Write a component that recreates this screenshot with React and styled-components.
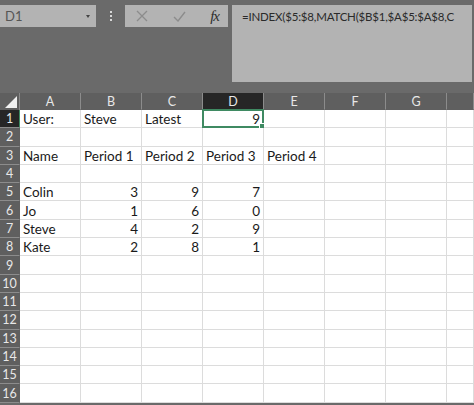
import React from 'react';
import styled, { createGlobalStyle } from 'styled-components';

const GlobalStyle = createGlobalStyle`
  html, body {
    margin: 0;
    padding: 0;
    background: #6a6a6a;
  }
`;

const Page = styled.div`
  width: 474px;
  height: 405px;
  overflow: hidden;
  background: #6a6a6a;
  font-family: Lato, "Open Sans", "Liberation Sans", sans-serif;
`;

const TopBar = styled.div`
  display: flex;
  align-items: flex-start;
  height: 93px;
  padding-top: 5px;
  box-sizing: border-box;
`;

const NameBox = styled.div`
  width: 96px;
  height: 22px;
  background: #b3b3b3;
  display: flex;
  align-items: center;
  justify-content: space-between;
  padding: 0 6px 0 5px;
  box-sizing: border-box;
  color: #555;
  font-size: 13px;
`;

const Caret = styled.span`
  width: 0;
  height: 0;
  border-left: 2.5px solid transparent;
  border-right: 2.5px solid transparent;
  border-top: 3px solid #444;
`;

const Grip = styled.div`
  width: 29px;
  height: 22px;
  display: flex;
  flex-direction: column;
  align-items: center;
  justify-content: center;
  gap: 2px;
`;

const Dot = styled.span`
  width: 2px;
  height: 2px;
  background: #d8d8d8;
`;

const ButtonsBox = styled.div`
  width: 103px;
  height: 22px;
  background: #b3b3b3;
  display: flex;
  align-items: center;
  justify-content: space-between;
  padding: 0 9px 0 11px;
  box-sizing: border-box;
`;

const Fx = styled.span`
  font-family: "Liberation Serif", serif;
  font-style: italic;
  font-size: 15px;
  color: #2e2e2e;
  letter-spacing: -1px;
`;

const FormulaBar = styled.div`
  flex: 1;
  height: 77px;
  margin: 0 2px 0 4px;
  background: #b3b3b3;
  padding: 5px 0 0 10px;
  box-sizing: border-box;
  font-size: 11.5px;
  letter-spacing: -0.2px;
  color: #2a2a2a;
  white-space: nowrap;
  overflow: hidden;
`;

const Sheet = styled.div`
  display: grid;
  grid-template-columns: 20px repeat(7, 61px) 1fr;
  grid-template-rows: 17px;
  grid-auto-rows: 18.3px;
`;

const Corner = styled.div`
  background: #5f5f5f;
  position: relative;
  border-right: 1px solid #8a8a8a;
  box-sizing: border-box;
  &::after {
    content: '';
    position: absolute;
    right: 2px;
    bottom: 2px;
    border-left: 12px solid transparent;
    border-bottom: 12px solid #f2f2f2;
  }
`;

const ColHead = styled.div`
  background: ${({ $active }) => ($active ? '#262626' : '#5f5f5f')};
  color: #e8e8e8;
  font-size: 12.5px;
  display: flex;
  align-items: center;
  justify-content: center;
  border-right: 1px solid #8c8c8c;
  border-bottom: 1px solid ${({ $active }) => ($active ? '#3f8a62' : '#5f5f5f')};
  box-sizing: border-box;
`;

const RowHead = styled.div`
  background: ${({ $active }) => ($active ? '#262626' : '#5f5f5f')};
  color: #e8e8e8;
  font-size: 12.5px;
  display: flex;
  align-items: center;
  justify-content: center;
  border-bottom: 1px solid #8c8c8c;
  border-right: 1px solid ${({ $active }) => ($active ? '#3f8a62' : '#5f5f5f')};
  box-sizing: border-box;
`;

const Cell = styled.div`
  background: #fff;
  border-right: 1px solid #dcdcdc;
  border-bottom: 1px solid #dcdcdc;
  box-sizing: border-box;
  font-size: 13.5px;
  color: #1a1a1a;
  display: flex;
  align-items: center;
  justify-content: ${({ $num }) => ($num ? 'flex-end' : 'flex-start')};
  padding: 1px 3px 0 3px;
  white-space: nowrap;
  overflow: visible;
  position: relative;
`;

const Selection = styled.div`
  position: absolute;
  left: -1px;
  top: -1px;
  right: -1px;
  bottom: -1px;
  border: 2px solid #3f8a62;
  pointer-events: none;
  &::after {
    content: '';
    position: absolute;
    right: -4px;
    bottom: -4px;
    width: 5px;
    height: 5px;
    background: #3f8a62;
    border: 1px solid #fff;
  }
`;

const columns = ['A', 'B', 'C', 'D', 'E', 'F', 'G', ''];

const data = {
  1: ['User:', 'Steve', 'Latest', 9],
  3: ['Name', 'Period 1', 'Period 2', 'Period 3', 'Period 4'],
  5: ['Colin', 3, 9, 7],
  6: ['Jo', 1, 6, 0],
  7: ['Steve', 4, 2, 9],
  8: ['Kate', 2, 8, 1],
};

const rows = Array.from({ length: 16 }, (_, i) => i + 1);

function CrossIcon() {
  return (
    <svg width="12" height="12" viewBox="0 0 12 12">
      <path d="M1 1 L11 11 M11 1 L1 11" stroke="#8c8c8c" strokeWidth="1.3" fill="none" />
    </svg>
  );
}

function CheckIcon() {
  return (
    <svg width="13" height="11" viewBox="0 0 13 11">
      <path d="M1 6 L5 10 L12 1" stroke="#8c8c8c" strokeWidth="1.4" fill="none" />
    </svg>
  );
}

export default function App() {
  return (
    <Page>
      <GlobalStyle />
      <TopBar>
        <NameBox>
          D1
          <Caret />
        </NameBox>
        <Grip>
          <Dot />
          <Dot />
          <Dot />
        </Grip>
        <ButtonsBox>
          <CrossIcon />
          <CheckIcon />
          <Fx>fx</Fx>
        </ButtonsBox>
        <FormulaBar>=INDEX($5:$8,MATCH($B$1,$A$5:$A$8,C</FormulaBar>
      </TopBar>
      <Sheet>
        <Corner />
        {columns.map((c, i) => (
          <ColHead key={i} $active={c === 'D'}>{c}</ColHead>
        ))}
        {rows.map(r => (
          <React.Fragment key={r}>
            <RowHead $active={r === 1}>{r}</RowHead>
            {columns.map((c, i) => {
              const v = data[r] ? data[r][i] : undefined;
              const num = typeof v === 'number';
              return (
                <Cell key={i} $num={num}>
                  {v}
                  {r === 1 && c === 'D' && <Selection />}
                </Cell>
              );
            })}
          </React.Fragment>
        ))}
      </Sheet>
    </Page>
  );
}
